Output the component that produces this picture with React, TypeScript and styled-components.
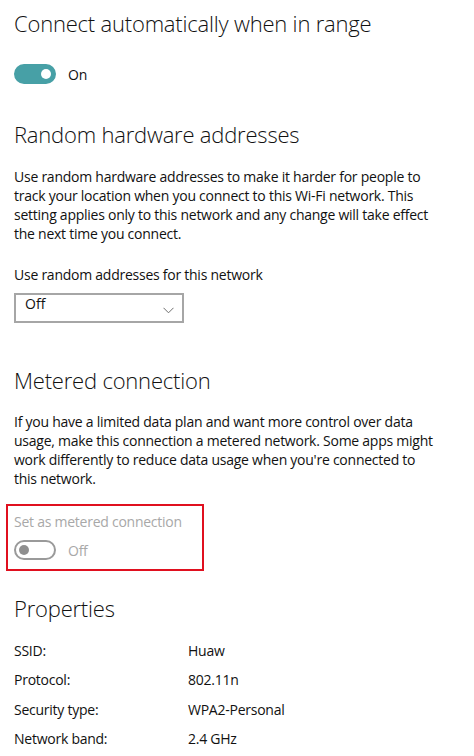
import { createGlobalStyle } from 'styled-components'
import styled from 'styled-components'

const GlobalStyle = createGlobalStyle`
  html, body {
    margin: 0;
    padding: 0;
    background: #fff;
  }
  body {
    font-family: "Open Sans", "Noto Sans", sans-serif;
    color: #111;
  }
`

const properties = [
  { label: 'SSID:', value: 'Huaw' },
  { label: 'Protocol:', value: '802.11n' },
  { label: 'Security type:', value: 'WPA2-Personal' },
  { label: 'Network band:', value: '2.4 GHz' },
]

const Toggle = ({ on, label, top }: { on: boolean; label: string; top: number }) => (
  <ToggleRow $on={on} $top={top}>
    <Track $on={on}>
      <Knob $on={on} />
    </Track>
    <span>{label}</span>
  </ToggleRow>
)

const App = () => {
  return (
    <Page>
      <GlobalStyle />
      <Section>
        <Heading>Connect automatically when in range</Heading>
        <Toggle on label="On" top={23} />
      </Section>

      <Section $top={32}>
        <Heading>Random hardware addresses</Heading>
        <Paragraph $top={15}>
          Use random hardware addresses to make it harder for people to
          <br />
          track your location when you connect to this Wi-Fi network. This
          <br />
          setting applies only to this network and any change will take effect
          <br />
          the next time you connect.
        </Paragraph>
        <FieldLabel>Use random addresses for this network</FieldLabel>
        <Select>
          <span>Off</span>
          <svg width="11" height="7" viewBox="0 0 11 7">
            <path d="M0.5 0.8l5 5 5-5" fill="none" stroke="#6e6e6e" strokeWidth="1" />
          </svg>
        </Select>
      </Section>

      <Section $top={39}>
        <Heading>Metered connection</Heading>
        <Paragraph $top={14}>
          If you have a limited data plan and want more control over data
          <br />
          usage, make this connection a metered network. Some apps might
          <br />
          work differently to reduce data usage when you're connected to
          <br />
          this network.
        </Paragraph>
        <Highlight>
          <DisabledLabel>Set as metered connection</DisabledLabel>
          <Toggle on={false} label="Off" top={9} />
        </Highlight>
      </Section>

      <Section $top={19}>
        <Heading>Properties</Heading>
        <PropTable>
          {properties.map((p) => (
            <PropRow key={p.label}>
              <span>{p.label}</span>
              <span>{p.value}</span>
            </PropRow>
          ))}
        </PropTable>
      </Section>
    </Page>
  )
}

export default App

const Page = styled.div`
  width: 474px;
  height: 756px;
  overflow: hidden;
  padding: 5px 0 0 14px;
  box-sizing: border-box;
`

const Section = styled.section<{ $top?: number }>`
  display: flex;
  flex-direction: column;
  align-items: flex-start;
  margin-top: ${(p) => p.$top ?? 0}px;
`

const Heading = styled.h2`
  margin: 0;
  font-weight: 300;
  font-size: 22px;
  line-height: 36px;
  color: #111;
  letter-spacing: -0.2px;
  white-space: nowrap;
`

const ToggleRow = styled.div<{ $on: boolean; $top: number }>`
  display: flex;
  align-items: center;
  gap: 12px;
  margin-top: ${(p) => p.$top}px;
  font-size: 14px;
  line-height: 19px;
  letter-spacing: -0.25px;
  color: ${(p) => (p.$on ? '#111' : '#a8a8a8')};
`

const Track = styled.div<{ $on: boolean }>`
  width: 42px;
  height: 20px;
  border-radius: 10px;
  box-sizing: border-box;
  display: flex;
  align-items: center;
  padding: 0 3px;
  justify-content: ${(p) => (p.$on ? 'flex-end' : 'flex-start')};
  background: ${(p) => (p.$on ? '#47a0a6' : '#fff')};
  border: 2px solid ${(p) => (p.$on ? '#47a0a6' : '#9a9a9a')};
`

const Knob = styled.div<{ $on: boolean }>`
  width: 10px;
  height: 10px;
  border-radius: 50%;
  background: ${(p) => (p.$on ? '#fff' : '#8f8f8f')};
`

const Paragraph = styled.p<{ $top: number }>`
  margin: ${(p) => p.$top}px 0 0;
  font-size: 14px;
  line-height: 19px;
  letter-spacing: -0.25px;
  color: #111;
  white-space: nowrap;
`

const FieldLabel = styled.div`
  margin-top: 22px;
  font-size: 14px;
  line-height: 19px;
  letter-spacing: -0.25px;
`

const Select = styled.div`
  margin-top: 9px;
  width: 170px;
  height: 30px;
  box-sizing: border-box;
  border: 2px solid #a6a6a6;
  display: flex;
  align-items: flex-start;
  justify-content: space-between;
  padding: 0 8px 0 9px;
  font-size: 14px;
  line-height: 17px;

  svg {
    margin-top: 12px;
  }
`

const Highlight = styled.div`
  margin: 16px 0 0 -8px;
  width: 198px;
  height: 67px;
  box-sizing: border-box;
  border: 2px solid #e0101f;
  padding: 6px 0 0 6px;
`

const DisabledLabel = styled.div`
  font-size: 14px;
  line-height: 19px;
  letter-spacing: -0.25px;
  color: #a8a8a8;
`

const PropTable = styled.div`
  margin-top: 10px;
  display: flex;
  flex-direction: column;
`

const PropRow = styled.div`
  display: grid;
  grid-template-columns: 174px auto;
  font-size: 14px;
  line-height: 29.3px;
  letter-spacing: -0.25px;
`
